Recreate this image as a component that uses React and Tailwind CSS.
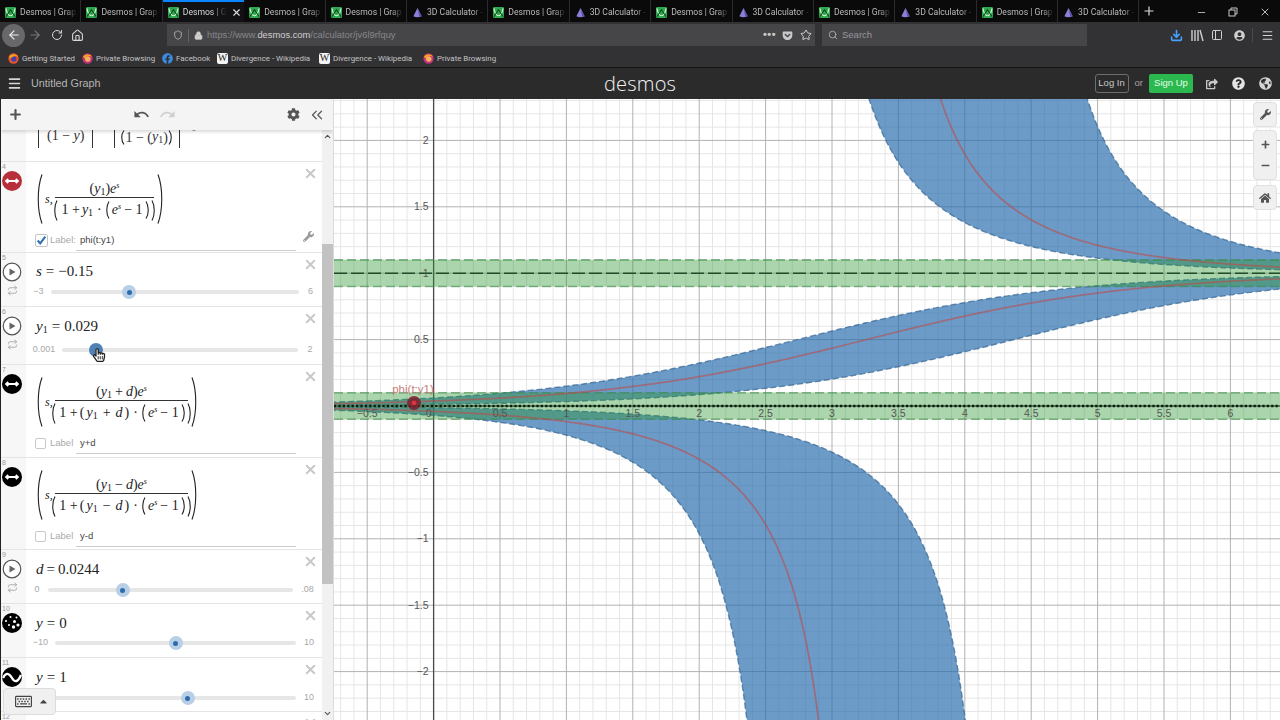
import React from "react";
import { ArrowLeft, ArrowRight, RotateCw, House, Shield, Lock, Star, Search, Download, PanelLeft, Menu, X, Plus, Minus, ChevronsLeft, Repeat, ChevronUp, ChevronDown } from "lucide-react";
import { FaCog, FaWrench, FaHome, FaPlus, FaMinus, FaShareSquare, FaQuestionCircle, FaGlobeAmericas, FaRegKeyboard, FaCaretUp, FaFacebook, FaUserCircle, FaGetPocket, FaRegHandPointer, FaHandPointer } from "react-icons/fa";
import { MdUndo, MdRedo } from "react-icons/md";

const TABS = ["D","D","A","D","D","C","D","C","D","C","D","C","D","C"];

function DesmosFav() {
  return (
    <svg width="11" height="11" viewBox="0 0 12 12" className="shrink-0">
      <rect width="12" height="12" rx="1.5" fill="#2fa84f" />
      <path d="M1 1.5 C2 7 4 9.5 6 9.5 C8 9.5 10 7 11 1.5" stroke="#d8f5d0" strokeWidth="1.2" fill="none" />
      <path d="M1 10.5 C3 8 4.5 5 6 3 C7.5 5 9 8 11 10.5" stroke="#0c4d22" strokeWidth="1.2" fill="none" />
    </svg>
  );
}

function CalcFav() {
  return (
    <svg width="11" height="11" viewBox="0 0 12 12" className="shrink-0">
      <path d="M6 1 L10.5 10 C8 11.5 4 11.5 1.5 10 Z" fill="#8b80d8" />
      <path d="M6 1 L8 10.8 C9 10.6 10 10.3 10.5 10 Z" fill="#5c52a8" />
    </svg>
  );
}

function Tab({ kind }) {
  const active = kind === "A";
  const label = kind === "C" ? "3D Calculator -" : active ? "Desmos | G" : "Desmos | Grap";
  return (
    <div className={active
      ? "w-[81.4px] h-[22px] shrink-0 flex items-center gap-[4px] pl-[5px] pr-[5px] pt-[1px] border-t-2 border-[#0a84ff] bg-[#111113]"
      : "w-[81.4px] h-[22px] shrink-0 flex items-center gap-[4px] pl-[5px] pr-[3px] pt-[3px] border-r border-[#2b2b2d]"}>
      {kind === "C" ? <CalcFav /> : <DesmosFav />}
      <span className={active
        ? "font-['Roboto'] text-[8.6px] text-[#d8d8d8] whitespace-nowrap flex-1 [mask-image:linear-gradient(90deg,black_65%,transparent)]"
        : "font-['Roboto'] text-[8.6px] text-[#bcbcbc] whitespace-nowrap flex-1 [mask-image:linear-gradient(90deg,black_80%,transparent)]"}>{label}</span>
      {active && <X size={11} strokeWidth={2.4} className="text-[#e0e0e0] shrink-0" />}
    </div>
  );
}

function Firefox({ dark }) {
  return (
    <svg width="11" height="11" viewBox="0 0 12 12" className="shrink-0">
      <circle cx="6" cy="6" r="5.6" fill={dark ? "#c2307e" : "#e8562a"} />
      <circle cx="6.3" cy="6.6" r="3" fill={dark ? "#f4b25a" : "#4a3fa8"} />
      <path d="M1 4 C3 1 8 0 11 4 C8 2.5 5 3 3 6 Z" fill="#f7a01e" />
    </svg>
  );
}

function Wiki() {
  return <span className="w-[11px] h-[11px] shrink-0 rounded-[2px] bg-[#f4f4f4] text-[#222] flex items-center justify-center font-['Liberation_Serif'] text-[10px] leading-none">W</span>;
}

function Bookmark({ icon, label, w }) {
  return (
    <div className={w + " flex items-center gap-[3px] shrink-0"}>
      {icon}
      <span className="font-['Roboto'] text-[7.9px] text-[#c4c4c4] whitespace-nowrap">{label}</span>
    </div>
  );
}

function LibraryIcon() {
  return (
    <svg width="14" height="13" viewBox="0 0 14 13" fill="none" stroke="#cfcfcf" strokeWidth="1.4">
      <path d="M2 1v11M5 1v11M8 1v11M10 1l3 11" />
    </svg>
  );
}

function BrowserChrome() {
  return (
    <>
      <div className="h-[22px] bg-[#0a0a0b] flex items-center shrink-0">
        {TABS.map((t, i) => <Tab key={i} kind={t} />)}
        <Plus size={14} className="text-[#dcdcdc] ml-[3px]" />
        <div className="flex-1 flex justify-end items-center gap-[21px] pr-[9px] pt-[2px] text-[#bcbcbc]">
          <Minus size={11} />
          <svg width="10" height="10" viewBox="0 0 10 10" fill="none" stroke="#c8c8c8"><rect x="1" y="3" width="6" height="6" /><path d="M3 3V1h6v6H7" /></svg>
          <X size={12} />
        </div>
      </div>
      <div className="h-[25px] bg-[#323234] flex items-center shrink-0 pt-[1px]">
        <div className="w-[23px] h-[23px] ml-[2px] rounded-full bg-[#68686a] flex items-center justify-center">
          <ArrowLeft size={14} className="text-[#efefef]" />
        </div>
        <ArrowRight size={14} className="text-[#77777a] ml-[3px]" />
        <RotateCw size={12} className="text-[#d8d8d8] ml-[9px]" />
        <House size={13} className="text-[#d8d8d8] ml-[8px]" />
        <div className="w-[648px] h-[22px] ml-[83px] bg-[#464648] flex items-center pl-[6px] pr-[3px] shrink-0">
          <Shield size={10} className="text-[#bdbdbd]" />
          <div className="w-px h-[13px] bg-[#66666a] ml-[5px]" />
          <Lock size={9} className="text-[#d0d0d0] ml-[5px]" fill="#d0d0d0" />
          <span className="text-[9.35px] ml-[4px] text-[#86868a] whitespace-nowrap">https://www.<span className="text-[#d0d0d0]">desmos.com</span>/calculator/jv6l9rfquy</span>
          <div className="flex-1" />
          <span className="text-[11px] font-bold leading-none text-[#c8c8c8] mr-[6px] -mt-[2px] tracking-[0.5px]">•••</span>
          <FaGetPocket size={11} className="text-[#c8c8c8] mr-[7px]" />
          <Star size={12} className="text-[#d4d4d4]" />
        </div>
        <div className="w-[265px] h-[22px] ml-[7px] bg-[#464648] flex items-center pl-[6px] shrink-0">
          <Search size={10} className="text-[#b4b4b4]" />
          <span className="text-[9.5px] text-[#98989c] ml-[4px]">Search</span>
        </div>
        <Download size={13} className="text-[#45a1ff] ml-[83px]" strokeWidth={3} />
        <div className="ml-[7px]"><LibraryIcon /></div>
        <PanelLeft size={12} className="text-[#cfcfcf] ml-[7px]" />
        <FaUserCircle size={11} className="text-[#cfcfcf] ml-[11px]" />
        <div className="w-px h-[14px] bg-[#4a4a4c] ml-[7px]" />
        <Menu size={13} className="text-[#d4d4d4] ml-[8px]" />
      </div>
      <div className="h-[21px] bg-[#323234] flex items-center pl-[8px] pt-[3px] border-b border-[#141415] shrink-0">
        <Bookmark w="w-[74px]" icon={<Firefox />} label="Getting Started" />
        <Bookmark w="w-[80px]" icon={<Firefox dark />} label="Private Browsing" />
        <Bookmark w="w-[55px]" icon={<FaFacebook size={11} className="text-[#3b8be0] shrink-0" />} label="Facebook" />
        <Bookmark w="w-[102px]" icon={<Wiki />} label="Divergence - Wikipedia" />
        <Bookmark w="w-[104px]" icon={<Wiki />} label="Divergence - Wikipedia" />
        <Bookmark w="w-[80px]" icon={<Firefox dark />} label="Private Browsing" />
      </div>
    </>
  );
}

function DesmosHeader() {
  return (
    <div className="h-[31px] bg-[#2b2b2b] flex items-center shrink-0 relative">
      <Menu size={15} className="text-[#d6d6d6] ml-[7px]" strokeWidth={2.5} />
      <span className="ml-[9px] text-[10.8px] text-[#b4b4b4]">Untitled Graph</span>
      <span className="absolute left-[604px] top-[2px] font-['Open_Sans'] font-light text-[20px] leading-[27px] text-[#f4f4f4] tracking-[0.2px]">desmos</span>
      <div className="flex-1" />
      <div className="h-[19px] w-[34px] border border-[#6e6e6e] rounded-[3px] flex items-center justify-center text-[9.5px] text-[#c8c8c8]">Log In</div>
      <span className="text-[9.5px] text-[#a4a4a4] ml-[6px]">or</span>
      <div className="h-[19px] w-[44px] ml-[6px] rounded-[2px] bg-[#2bb84f] flex items-center justify-center text-[9.5px] text-[#e6ffe9]">Sign Up</div>
      <FaShareSquare size={12} className="text-[#c8c8c8] ml-[13px]" />
      <FaQuestionCircle size={13} className="text-[#e4e4e4] ml-[14px]" />
      <FaGlobeAmericas size={13} className="text-[#d4d4d4] ml-[14px] mr-[8px]" />
    </div>
  );
}

/* math helpers */
const Y = ({ sub = "1" }) => <span className="whitespace-nowrap"><i>y</i><sub className="text-[10px] not-italic relative top-[2px] leading-none align-baseline">{sub}</sub></span>;
const ES = () => <span className="whitespace-nowrap"><i>e</i><sup className="text-[8px] italic leading-none relative -top-[5px] align-baseline">s</sup></span>;

function Paren({ h = 50, right }) {
  const w = h > 30 ? 6 : 4;
  return (
    <svg width={w} height={h} viewBox={`0 0 ${w} ${h}`} className="shrink-0" fill="none" stroke="#222" strokeWidth="1.1">
      {right
        ? <path d={`M1 0.5 C${w} ${h * 0.28} ${w} ${h * 0.72} 1 ${h - 0.5}`} />
        : <path d={`M${w - 1} 0.5 C0 ${h * 0.28} 0 ${h * 0.72} ${w - 1} ${h - 0.5}`} />}
    </svg>
  );
}

function Tuple({ num, den, w }) {
  return (
    <div className="flex items-center ml-[11px] font-['Liberation_Serif'] text-[#222]">
      <Paren />
      <span className="text-[12px] ml-[2px] mr-[1px] w-[9px] whitespace-nowrap"><i>s</i>,</span>
      <div className={w + " flex flex-col items-center"}>
        <div className="h-[21px] flex items-end pb-[1px] text-[14px] leading-none">{num}</div>
        <div className="w-full h-px bg-[#333]" />
        <div className="h-[24px] flex items-center gap-[2px] text-[14px] leading-none whitespace-nowrap">{den}</div>
      </div>
      <span className="w-[3px]" />
      <Paren right />
    </div>
  );
}

function Den({ inner }) {
  return (
    <>
      <Paren h={21} />
      <span className="ml-[1px]">1 + </span>
      {inner}
      <span className="mx-[2px]">·</span>
      <Paren h={18} />
      <ES /><span className="ml-[1px]">− 1</span>
      <Paren h={18} right />
      <Paren h={21} right />
    </>
  );
}

function LabelRow({ checked, text }) {
  return (
    <div className="flex items-center mt-[6px] ml-[9px] h-[20px] relative">
      {checked
        ? <span className="w-[13px] h-[13px] border border-[#c4c4c4] rounded-[2px] bg-white flex items-center justify-center">
            <svg width="13" height="13" viewBox="0 0 13 13"><path d="M2 6.5l3 3.5 6-8" stroke="#2d70b3" strokeWidth="2.4" fill="none" /></svg>
          </span>
        : <span className="w-[11px] h-[11px] border border-[#c8c8c8] rounded-[2px] bg-white" />}
      <span className={checked ? "text-[9.5px] text-[#aaa] ml-[2px] w-[26px]" : "text-[9.5px] text-[#aaa] ml-[4px] w-[26px]"}>{checked ? "Label:" : "Label"}</span>
      <div className="w-[220px] h-[20px] border-b border-[#ccc] pl-[4px] flex items-center text-[9.5px] text-[#444] mt-[1px]">{text}</div>
    </div>
  );
}

function Slider({ min, max, pct, minW, maxW, solid, top }) {
  return (
    <div className={top + " flex items-center h-[12px]"}>
      <span className={minW + " text-center text-[9px] text-[#a8a8a8] whitespace-nowrap shrink-0"}>{min}</span>
      <div className="flex-1 h-[4px] rounded-full bg-[#e6e6e6] relative">
        <span
          className={solid ? "absolute -top-[5px] w-[14px] h-[14px] -ml-[7px] rounded-full bg-[#4f81b6]" : "absolute -top-[5px] w-[14px] h-[14px] -ml-[7px] rounded-full bg-[#b9cfe6] flex items-center justify-center"}
          style={{ left: pct + "%" }}
        >
          {!solid && <span className="w-[5px] h-[5px] rounded-full bg-[#2d6cab]" />}
        </span>
      </div>
      <span className={maxW + " text-center text-[9px] text-[#a8a8a8] shrink-0"}>{max}</span>
    </div>
  );
}

function RowIcon({ kind }) {
  if (kind === "play") {
    return (
      <svg width="20" height="20" viewBox="0 0 20 20">
        <circle cx="10" cy="10" r="8.8" fill="#fff" stroke="#555" strokeWidth="1.2" />
        <path d="M7.5 6.5L13.5 10L7.5 13.5Z" fill="#666" />
      </svg>
    );
  }
  if (kind === "red" || kind === "black") {
    return (
      <svg width="20" height="20" viewBox="0 0 20 20">
        <circle cx="10" cy="10" r="10" fill={kind === "red" ? "#b72f3b" : "#000"} />
        <path d="M4 10H16M6.2 7.8L4 10L6.2 12.2M13.8 7.8L16 10L13.8 12.2" stroke="#fff" strokeWidth="1.8" fill="none" />
      </svg>
    );
  }
  if (kind === "dots") {
    return (
      <svg width="20" height="20" viewBox="0 0 20 20">
        <circle cx="10" cy="10" r="10" fill="#000" />
        <g fill="#fff">
          <circle cx="4" cy="8" r="1.1" /><circle cx="8.5" cy="4" r="1" /><circle cx="12.5" cy="8.5" r="1.5" /><circle cx="7" cy="12" r="1" /><circle cx="11.5" cy="14" r="1.7" /><circle cx="16" cy="12" r="1.6" /><circle cx="14.5" cy="4.5" r="1" />
        </g>
      </svg>
    );
  }
  return (
    <svg width="20" height="20" viewBox="0 0 20 20">
      <circle cx="10" cy="10" r="10" fill="#000" />
      <path d="M1 11C4 5 7 6 10 11C13 16 16 15 19 8" stroke="#fff" strokeWidth="2.4" fill="none" />
    </svg>
  );
}

function Row({ h, n, icon, repeat, children }) {
  return (
    <div className={h + " shrink-0 flex border-b border-[#e4e4e4] relative"}>
      <div className="w-[25px] bg-[#f7f7f7] shrink-0 relative flex flex-col pl-[1px] pt-[9px]">
        <span className="absolute left-[1px] top-[1px] text-[7px] leading-[8px] text-[#9a9a9a]">{n}</span>
        {icon && <RowIcon kind={icon} />}
        {repeat && <Repeat size={11} className="text-[#a8a8a8] ml-[5px] mt-[3px]" />}
      </div>
      <div className="flex-1 min-w-0">{children}</div>
      <X size={15} strokeWidth={3} className="absolute left-[302px] top-[4px] text-[#c8c8c8]" />
    </div>
  );
}

const MathLine = ({ children, top }) => (
  <div className={top + " ml-[10px] h-[20px] flex items-center font-['Liberation_Serif'] text-[15px] text-[#222] whitespace-nowrap"}>{children}</div>
);

const Bar = ({ cls }) => <span className={cls + " w-px h-[20px] -mt-[2px] bg-[#333] shrink-0"} />;

function Sidebar() {
  return (
    <div className="w-[334px] shrink-0 flex flex-col bg-white relative overflow-hidden border-l border-r border-l-[#222] border-r-[#dcdcdc]">
      <div className="h-[31px] shrink-0 bg-[#f4f4f4] flex items-center shadow-[0_2px_3px_rgba(0,0,0,0.15)] relative z-10">
        <Plus size={15} strokeWidth={3.4} className="text-[#555] ml-[7px]" />
        <MdUndo size={17} className="text-[#555] ml-[110px]" />
        <MdRedo size={17} className="text-[#cfcfcf] ml-[9px]" />
        <FaCog size={13} className="text-[#555] ml-[111px]" />
        <ChevronsLeft size={18} strokeWidth={1.6} className="text-[#555] ml-[8px]" />
      </div>
      <div className="flex-1 flex min-h-0">
        <div className="flex-1 flex flex-col overflow-hidden min-w-0">
          <div className="h-[32px] shrink-0 flex border-b border-[#e4e4e4]">
            <div className="w-[25px] bg-[#f7f7f7] shrink-0" />
            <div className="flex items-start ml-[12px] font-['Liberation_Serif'] text-[14px] text-[#333] whitespace-nowrap">
              <Bar cls="" />
              <span className="ml-[8px] mt-[1px] leading-[10px]">(1 − <i>y</i>)</span>
              <Bar cls="ml-[8px]" />
              <Bar cls="ml-[21px]" />
              <span className="ml-[6px] flex items-center leading-[10px]"><Paren h={15} />1 − (<Y />)<Paren h={15} right /></span>
              <Bar cls="ml-[7px]" />
              <span className="ml-[12px] text-[11px] leading-[6px] text-[#555]">˘</span>
            </div>
          </div>

          <Row h="h-[91px]" n="4" icon="red">
            <div className="pt-[12px]">
              <Tuple w="w-[99px]" num={<>(<Y />)<ES /></>} den={<Den inner={<Y />} />} />
              <LabelRow checked text="phi(t:y1)" />
            </div>
            <FaWrench size={11} className="absolute left-[302px] top-[69px] text-[#9a9a9a]" />
          </Row>

          <Row h="h-[54px]" n="5" icon="play" repeat>
            <MathLine top="mt-[8px]"><i>s</i><span className="mx-[4px]">=</span>−0.15</MathLine>
            <Slider top="mt-[5px]" min="−3" max="6" pct={31.5} minW="w-[25px]" maxW="w-[23px]" />
          </Row>

          <Row h="h-[58px]" n="6" icon="play" repeat>
            <MathLine top="mt-[9px]"><Y /><span className="mx-[4px]">=</span>0.029</MathLine>
            <div className="relative pt-[8px]">
              <Slider top="" min="0.001" max="2" pct={14.4} minW="w-[36px]" maxW="w-[24px]" solid />
              <FaHandPointer size={14} className="absolute left-[66px] top-[12px] text-white" />
              <FaRegHandPointer size={14} className="absolute left-[66px] top-[12px] text-[#222]" />
            </div>
          </Row>

          <Row h="h-[93px]" n="7" icon="black">
            <div className="pt-[12px]">
              <Tuple w="w-[133px]" num={<>(<Y /><span className="mx-[3px]">+</span><i>d</i>)<ES /></>} den={<Den inner={<>(<Y /><span className="mx-[3px]">+</span><i>d</i>)</>} />} />
              <LabelRow text="y+d" />
            </div>
          </Row>

          <Row h="h-[92px]" n="8" icon="black">
            <div className="pt-[12px]">
              <Tuple w="w-[133px]" num={<>(<Y /><span className="mx-[3px]">−</span><i>d</i>)<ES /></>} den={<Den inner={<>(<Y /><span className="mx-[3px]">−</span><i>d</i>)</>} />} />
              <LabelRow text="y-d" />
            </div>
          </Row>

          <Row h="h-[54px]" n="9" icon="play" repeat>
            <MathLine top="mt-[9px]"><i>d</i><span className="mx-[3px]">=</span>0.0244</MathLine>
            <Slider top="mt-[5px]" min="0" max=".08" pct={30.5} minW="w-[22px]" maxW="w-[29px]" />
          </Row>

          <Row h="h-[54px]" n="10" icon="dots">
            <MathLine top="mt-[9px]"><i>y</i><span className="mx-[4px]">=</span>0</MathLine>
            <Slider top="mt-[4px]" min="−10" max="10" pct={50} minW="w-[29px]" maxW="w-[26px]" />
          </Row>

          <Row h="h-[54px]" n="11" icon="wave">
            <MathLine top="mt-[9px]"><i>y</i><span className="mx-[4px]">=</span>1</MathLine>
            <Slider top="mt-[5px]" min="−10" max="10" pct={55} minW="w-[29px]" maxW="w-[26px]" />
          </Row>

          <Row h="h-[54px]" n="12" />
        </div>

        <div className="w-[11px] shrink-0 bg-[#f1f1f1] flex flex-col items-center relative">
          <ChevronUp size={9} strokeWidth={3} className="text-[#555] mt-[2px]" />
          <div className="w-full h-[340px] bg-[#c2c2c2] mt-[103px]" />
          <div className="flex-1" />
          <ChevronDown size={9} strokeWidth={3} className="text-[#555] mb-[2px]" />
        </div>
      </div>

      <div className="absolute left-[2px] top-[589px] w-[53px] h-[27px] rounded-[4px] bg-[#f0f0f0] border border-[#dcdcdc] flex items-center pl-[11px] gap-[6px]">
        <FaRegKeyboard size={17} className="text-[#444]" />
        <FaCaretUp size={11} className="text-[#444]" />
      </div>
    </div>
  );
}

/* graph */
const px = (v) => 433.6 + 132.8 * v;
const py = (v) => 406 - 132.8 * v;
const f = (y0, s) => { const e = Math.exp(s); return (y0 * e) / (1 + y0 * (e - 1)); };
const LIM = 3.2;

function samples(y0, branch) {
  const pts = [];
  const pole = y0 < 0 ? Math.log(1 - 1 / y0) : Infinity;
  for (let s = -0.78; s <= 6.45; s += 0.015) {
    if (branch === "low" && s >= pole) break;
    if (branch === "up" && s <= pole) continue;
    const v = f(y0, s);
    if (Math.abs(v) > LIM) continue;
    pts.push(`${px(s).toFixed(1)},${py(v).toFixed(1)}`);
  }
  return pts;
}

function Band({ a, b, branch }) {
  const A = samples(a, branch);
  const B = samples(b, branch);
  return (
    <>
      <polygon points={[...A, ...[...B].reverse()].join(" ")} fill="#256cab" fillOpacity="0.68" />
      <polyline points={A.join(" ")} fill="none" stroke="#3a6a96" strokeOpacity="0.75" strokeWidth="1.4" strokeDasharray="6 3" />
      <polyline points={B.join(" ")} fill="none" stroke="#3a6a96" strokeOpacity="0.75" strokeWidth="1.4" strokeDasharray="6 3" />
    </>
  );
}

function Curve({ y0, branch }) {
  return <polyline points={samples(y0, branch).join(" ")} fill="none" stroke="#c74440" strokeOpacity="0.55" strokeWidth="1.7" />;
}

const XL = [["−0.5", -0.5], ["0.5", 0.5], ["1", 1], ["1.5", 1.5], ["2", 2], ["2.5", 2.5], ["3", 3], ["3.5", 3.5], ["4", 4], ["4.5", 4.5], ["5", 5], ["5.5", 5.5], ["6", 6]];
const YL = [["2", 2], ["1.5", 1.5], ["1", 1], ["0.5", 0.5], ["−0.5", -0.5], ["−1", -1], ["−1.5", -1.5], ["−2", -2]];

function Graph() {
  const minorX = [], majorX = [], minorY = [], majorY = [];
  for (let i = -8; i <= 65; i++) (i % 5 === 0 ? majorX : minorX).push(i / 10);
  for (let i = -25; i <= 24; i++) (i % 5 === 0 ? majorY : minorY).push(i / 10);
  return (
    <div className="flex-1 relative bg-white overflow-hidden">
      <svg width="946" height="621" viewBox="334 99 946 621" className="block font-['Liberation_Sans']">
        {minorX.map((v) => <line key={v} x1={px(v)} x2={px(v)} y1="99" y2="720" stroke="#e6e6e6" />)}
        {minorY.map((v) => <line key={v} y1={py(v)} y2={py(v)} x1="334" x2="1280" stroke="#e6e6e6" />)}
        {majorX.map((v) => <line key={v} x1={px(v)} x2={px(v)} y1="99" y2="720" stroke="#b2b2b2" />)}
        {majorY.map((v) => <line key={v} y1={py(v)} y2={py(v)} x1="334" x2="1280" stroke="#b2b2b2" />)}
        <line x1={px(0)} x2={px(0)} y1="99" y2="720" stroke="#4a4a4a" strokeWidth="1.3" />
        <line y1={py(0)} y2={py(0)} x1="334" x2="1280" stroke="#4a4a4a" strokeWidth="1.3" />

        <Band a={0.0607} b={0.0125} />
        <Band a={-0.0711} b={-0.013} branch="low" />
        <Band a={-0.0711} b={-0.013} branch="up" />

        <rect x="334" y={py(1.1)} width="946" height="26.5" fill="#2c9630" fillOpacity="0.4" />
        <rect x="334" y={py(0.1)} width="946" height="26.5" fill="#2c9630" fillOpacity="0.4" />
        {[1.1, 0.9, 0.1, -0.1].map((v) => (
          <line key={v} x1="334" x2="1280" y1={py(v)} y2={py(v)} stroke="#388c46" strokeOpacity="0.6" strokeWidth="1.6" strokeDasharray="9 4" />
        ))}
        <line x1="334" x2="1280" y1={py(1)} y2={py(1)} stroke="#1f4d2a" strokeWidth="1.5" strokeDasharray="13 4" />
        <line x1="334" x2="1280" y1={py(0)} y2={py(0)} stroke="#0a1a10" strokeWidth="2.4" strokeDasharray="2.2 2.2" />

        <Curve y0={0.037} />
        <Curve y0={-0.0403} branch="low" />
        <Curve y0={-0.0403} branch="up" />

        {XL.map(([t, v]) => <text key={t} x={px(v)} y="416.5" textAnchor="middle" fontSize="10.5" fill="#555">{t}</text>)}
        <text x={px(0) - 5} y="416.5" textAnchor="middle" fontSize="10.5" fill="#555">0</text>
        {YL.map(([t, v]) => <text key={t} x={px(0) - 5} y={py(v) + 3.5} textAnchor="end" fontSize="10.5" fill="#555">{t}</text>)}

        <circle cx="414" cy="403" r="7" fill="#7a1f2a" fillOpacity="0.85" />
        <circle cx="414" cy="403" r="2.4" fill="#d8353f" />
        <text x="413" y="393" textAnchor="middle" fontSize="11.5" fill="#c97a7a">phi(t:y1)</text>
      </svg>

      <div className="absolute right-[3px] top-[3px] w-[24px] h-[25px] rounded-[4px] bg-[#f0f0f0] border border-[#e0e0e0] flex items-center justify-center">
        <FaWrench size={11} className="text-[#555]" />
      </div>
      <div className="absolute right-[3px] top-[31px] w-[24px] h-[50px] rounded-[4px] bg-[#f0f0f0] border border-[#e0e0e0] flex flex-col items-center justify-between py-[9px]">
        <FaPlus size={9} className="text-[#555]" />
        <FaMinus size={9} className="text-[#555]" />
      </div>
      <div className="absolute right-[3px] top-[86px] w-[24px] h-[25px] rounded-[4px] bg-[#f0f0f0] border border-[#e0e0e0] flex items-center justify-center">
        <FaHome size={12} className="text-[#555]" />
      </div>
    </div>
  );
}

export default function App() {
  return (
    <div className="w-[1280px] h-[720px] overflow-hidden flex flex-col bg-white font-['Liberation_Sans',sans-serif]">
      <BrowserChrome />
      <DesmosHeader />
      <div className="flex-1 flex min-h-0">
        <Sidebar />
        <Graph />
      </div>
    </div>
  );
}
